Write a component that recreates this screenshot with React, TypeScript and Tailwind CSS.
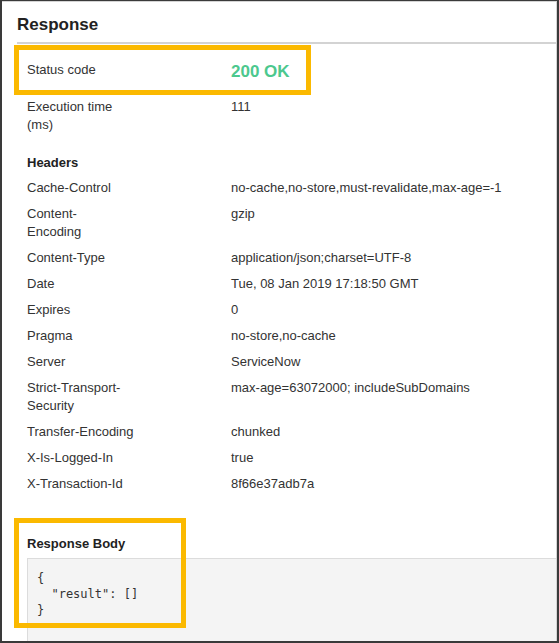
const headers: { name: React.ReactNode; value: string }[] = [
  { name: 'Cache-Control', value: 'no-cache,no-store,must-revalidate,max-age=-1' },
  { name: <>Content-<br />Encoding</>, value: 'gzip' },
  { name: 'Content-Type', value: 'application/json;charset=UTF-8' },
  { name: 'Date', value: 'Tue, 08 Jan 2019 17:18:50 GMT' },
  { name: 'Expires', value: '0' },
  { name: 'Pragma', value: 'no-store,no-cache' },
  { name: 'Server', value: 'ServiceNow' },
  { name: <>Strict-Transport-<br />Security</>, value: 'max-age=63072000; includeSubDomains' },
  { name: 'Transfer-Encoding', value: 'chunked' },
  { name: 'X-Is-Logged-In', value: 'true' },
  { name: 'X-Transaction-Id', value: '8f66e37adb7a' },
]

function Row({ name, value }: { name: React.ReactNode; value: React.ReactNode }) {
  return (
    <div className="flex py-[4px] leading-[18px]">
      <div className="w-[204px] shrink-0">{name}</div>
      <div>{value}</div>
    </div>
  )
}

export default function App() {
  return (
    <div
      className="relative w-[559px] h-[643px] overflow-hidden bg-white border-t border-l-2 border-r-2 border-b-2 border-[#3a3a3a] text-[13px] text-[#333]"
      style={{ fontFamily: '"Liberation Sans", Arial, sans-serif' }}
    >
      <div className="h-full border-t border-r border-[#d4d4d4] flex flex-col">
        {/* Title */}
        <div className="ml-[15px] pt-[12px] pb-[6px] border-b-2 border-[#d3d3d3]">
          <h1 className="text-[17px] leading-[22px] font-bold text-[#222]">Response</h1>
        </div>

        <div className="pl-[25px]">
          {/* Status */}
          <div className="flex items-center h-[50px] leading-[18px]">
            <div className="w-[204px] shrink-0 pt-[1px]">Status code</div>
            <div className="pt-[5px] text-[17px] font-bold text-[#4cc88e]">200 OK</div>
          </div>

          <Row name={<>Execution time<br />(ms)</>} value="111" />

          {/* Headers */}
          <div className="mt-[13px] py-[3px] leading-[18px] font-bold text-[#222]">Headers</div>
          {headers.map((h, i) => (
            <Row key={i} name={h.name} value={h.value} />
          ))}

          {/* Response body */}
          <div className="mt-[38px] leading-[18px] font-bold text-[#222]">Response Body</div>
        </div>

        <div className="ml-[25px] mt-[5px] flex-1 bg-[#f4f4f4] border-t border-l border-[#dcdcdc] pt-[11px] pl-[9px]">
          <pre
            className="text-[12px] leading-[16px] text-[#333]"
            style={{ fontFamily: '"DejaVu Sans Mono", Menlo, monospace' }}
          >
{`{
  "result": []
}`}
          </pre>
        </div>
      </div>

      {/* Highlight annotations */}
      <div className="absolute left-[12px] top-[44px] w-[297px] h-[50px] border-[5px] border-[#fbb900]" />
      <div className="absolute left-[12px] top-[517px] w-[172px] h-[110px] border-[5px] border-[#fbb900]" />
    </div>
  )
}
